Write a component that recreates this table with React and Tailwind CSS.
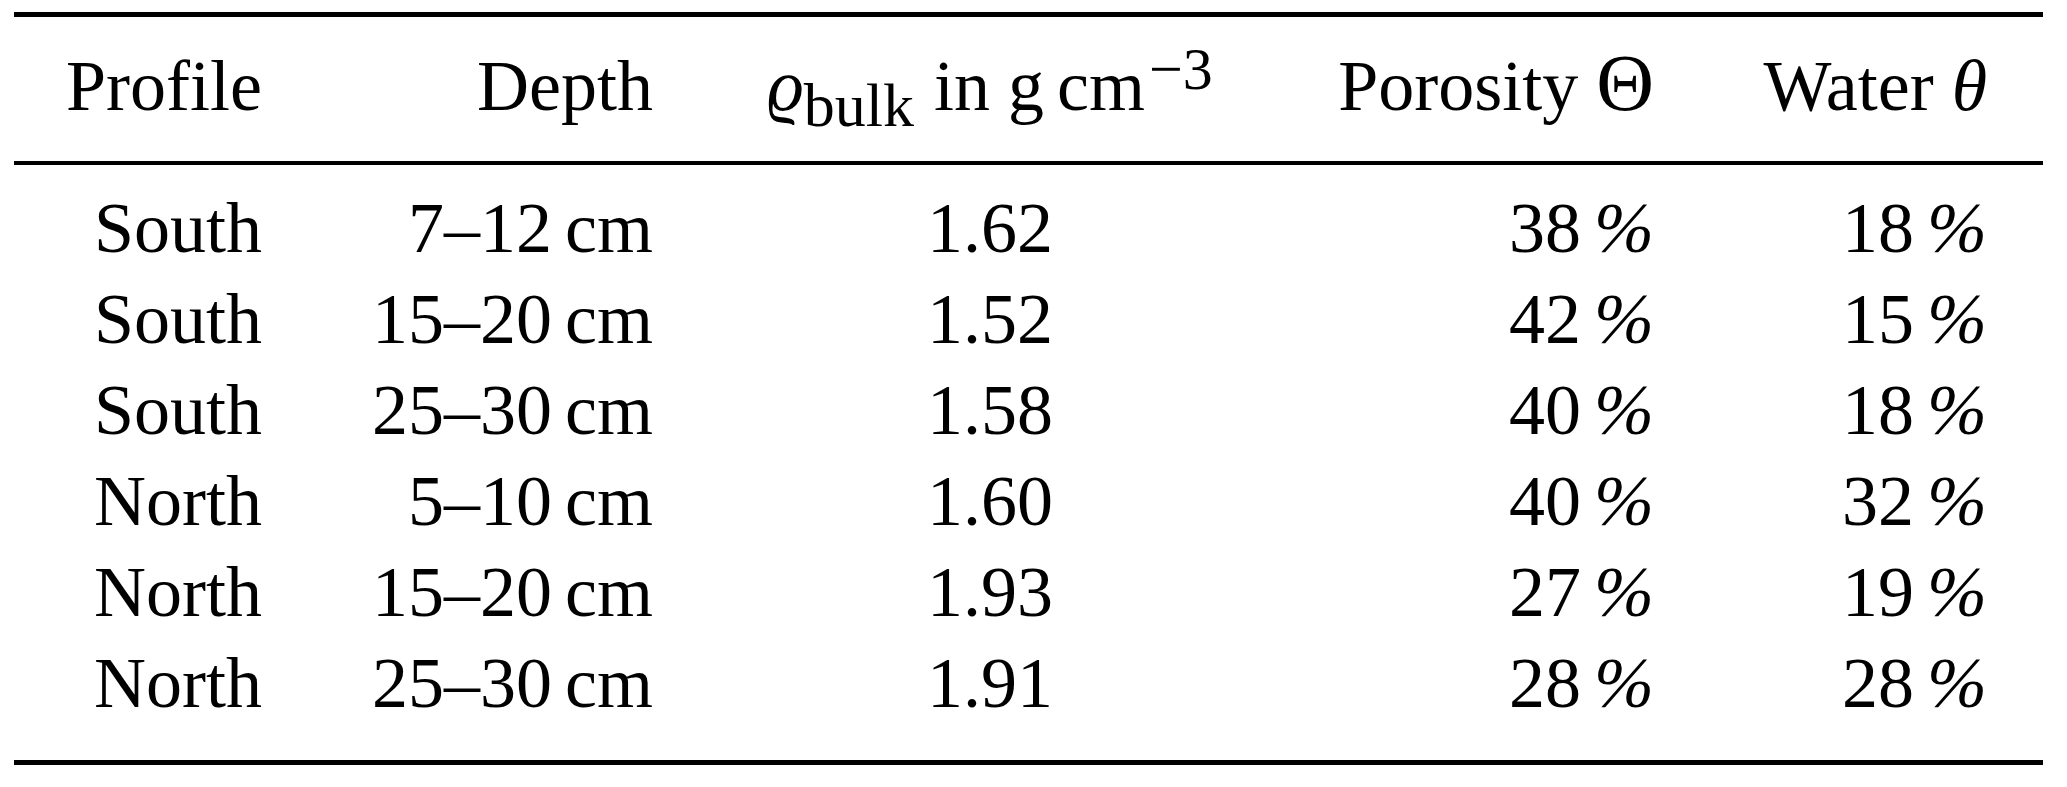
import React from "react";

const rows = [
  ["South", "7–12", "1.62", "38", "18"],
  ["South", "15–20", "1.52", "42", "15"],
  ["South", "25–30", "1.58", "40", "18"],
  ["North", "5–10", "1.60", "40", "32"],
  ["North", "15–20", "1.93", "27", "19"],
  ["North", "25–30", "1.91", "28", "28"],
];

const cols = "grid grid-cols-[248px_391px_674px_327px_333px]";

const Pct = ({ v }) => (
  <span>
    {v}
    <span className="ml-[13px] italic">%</span>
  </span>
);

const App = () => {
  return (
    <div
      className="w-[2067px] h-[787px] bg-white text-black pt-[12px] pl-[14px] text-[72px] leading-[91px]"
      style={{ fontFamily: '"Liberation Serif", "DejaVu Serif", serif' }}
    >
      <div className="w-[2029px]">
        <div className="h-[5px] bg-black" />

        {/* header */}
        <div className={`${cols} pt-[24px] pb-[29px]`}>
          <div className="text-right">Profile</div>
          <div className="text-right">Depth</div>
          <div className="text-center">
            <span className="italic">ϱ</span>
            <sub className="text-[62px] not-italic">bulk</sub>
            <span className="ml-[20px]">in g</span>
            <span className="ml-[13px]">cm</span>
            <sup className="text-[60px] ml-[4px] -top-[21px]">−3</sup>
          </div>
          <div className="text-right">
            Porosity <span className="text-[80px] leading-none">Θ</span>
          </div>
          <div className="text-right">
            Water <span className="italic">θ</span>
          </div>
        </div>

        <div className="h-[4px] bg-black" />

        {/* body */}
        <div className="pt-[18px] pb-[31px]">
          {rows.map((r, i) => (
            <div key={i} className={cols}>
              <div className="text-right">{r[0]}</div>
              <div className="text-right">
                {r[1]}
                <span className="ml-[13px]">cm</span>
              </div>
              <div className="text-center">{r[2]}</div>
              <div className="text-right">
                <Pct v={r[3]} />
              </div>
              <div className="text-right">
                <Pct v={r[4]} />
              </div>
            </div>
          ))}
        </div>

        <div className="h-[5px] bg-black" />
      </div>
    </div>
  );
};

export default App;
